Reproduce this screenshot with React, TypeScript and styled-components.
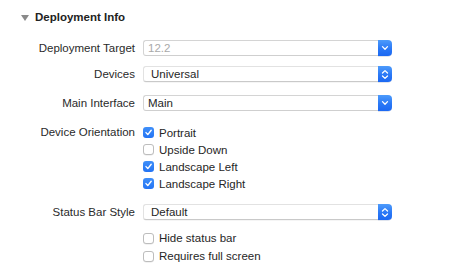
import React, {FC} from 'react'
import styled, {createGlobalStyle} from 'styled-components'

const GlobalStyle = createGlobalStyle`
  html, body {
    margin: 0;
    padding: 0;
    background: #fff;
  }
  body {
    font-family: "Liberation Sans", Arial, sans-serif;
    color: #262626;
    -webkit-font-smoothing: antialiased;
  }
`;

const Root = styled.div`
  width: 474px;
  height: 274px;
  overflow: hidden;
  box-sizing: border-box;
  padding: 9px 0 0 21px;
  display: flex;
  flex-direction: column;
`;

const Header = styled.div`
  display: flex;
  align-items: center;
  gap: 6px;
  height: 16px;
  font-size: 11.5px;
  font-weight: 700;
  color: #222;
`;

const Triangle = styled.span`
  width: 0;
  height: 0;
  border-left: 4px solid transparent;
  border-right: 4px solid transparent;
  border-top: 6px solid #8a8a8a;
  margin-top: 1px;
`;

type RowProps = {
    $top: number
}

const Row = styled.div<RowProps>`
  display: grid;
  grid-template-columns: 114px 249px;
  column-gap: 8px;
  align-items: start;
  margin-top: ${({$top}) => $top}px;
`;

const Label = styled.div`
  font-size: 11.5px;
  line-height: 16px;
  text-align: right;
  white-space: nowrap;
  color: #2a2a2a;
`;

const Field = styled.div`
  height: 16px;
  box-sizing: border-box;
  display: flex;
  align-items: stretch;
  font-size: 11.5px;
`;

type BoxProps = {
    $combo?: boolean
    $muted?: boolean
}

const FieldBox = styled.div<BoxProps>`
  flex: 1;
  display: flex;
  align-items: center;
  box-sizing: border-box;
  padding-left: ${({$combo}) => ($combo ? 4 : 7)}px;
  color: ${({$muted}) => ($muted ? '#a9a9a9' : '#262626')};
  background: #fff;
  border: 1px solid ${({$combo}) => ($combo ? '#d4d4d4' : '#e2e2e2')};
  border-bottom-color: ${({$combo}) => ($combo ? '#cfcfcf' : '#c9c9c9')};
  border-right: none;
  border-radius: 3px 0 0 3px;
  box-shadow: ${({$combo}) => ($combo ? 'none' : '0 0.5px 0.5px rgba(0,0,0,0.08)')};
`;

const ArrowButton = styled.div`
  width: 14px;
  display: flex;
  align-items: center;
  justify-content: center;
  border-radius: 0 4px 4px 0;
  background: linear-gradient(180deg, #4d9bfb 0%, #2a78f6 55%, #1b68f2 100%);
  box-shadow: 0 0.5px 0.5px rgba(0, 40, 120, 0.25);
`;

const Options = styled.div`
  display: flex;
  flex-direction: column;
`;

type CheckRowProps = {
    $height: number
}

const CheckRow = styled.label<CheckRowProps>`
  display: flex;
  align-items: center;
  gap: 5px;
  height: ${({$height}) => $height}px;
  font-size: 11.5px;
  color: #262626;
  white-space: nowrap;
`;

type BoxCheck = {
    $checked?: boolean
}

const CheckBox = styled.span<BoxCheck>`
  width: 11px;
  height: 11px;
  box-sizing: border-box;
  border-radius: 3px;
  display: flex;
  align-items: center;
  justify-content: center;
  background: ${({$checked}) => ($checked ? 'linear-gradient(180deg, #3f8ff9, #2474f4)' : '#fff')};
  border: ${({$checked}) => ($checked ? 'none' : '1px solid #bdbdbd')};
  box-shadow: ${({$checked}) => ($checked ? 'none' : '0 0.5px 0.5px rgba(0,0,0,0.1)')};
`;

const Chevron: FC<{double?: boolean}> = ({double}) => (
    double ? (
        <svg width="8" height="11" viewBox="0 0 8 11">
            <path d="M1.5 4 L4 1.6 L6.5 4" fill="none" stroke="#fff" strokeWidth="1.3" strokeLinecap="round" strokeLinejoin="round"/>
            <path d="M1.5 7 L4 9.4 L6.5 7" fill="none" stroke="#fff" strokeWidth="1.3" strokeLinecap="round" strokeLinejoin="round"/>
        </svg>
    ) : (
        <svg width="8" height="6" viewBox="0 0 8 6">
            <path d="M1.5 1.6 L4 4.2 L6.5 1.6" fill="none" stroke="#fff" strokeWidth="1.3" strokeLinecap="round" strokeLinejoin="round"/>
        </svg>
    )
)

const Check: FC = () => (
    <svg width="9" height="9" viewBox="0 0 9 9">
        <path d="M2 4.6 L3.8 6.6 L7.2 2.2" fill="none" stroke="#fff" strokeWidth="1.4" strokeLinecap="round" strokeLinejoin="round"/>
    </svg>
)

type Select = {
    label: string
    value: string
    top: number
    combo?: boolean
    muted?: boolean
}

const selects: Select[] = [
    {label: 'Deployment Target', value: '12.2', top: 15, combo: true, muted: true},
    {label: 'Devices', value: 'Universal', top: 10},
    {label: 'Main Interface', value: 'Main', top: 13, combo: true},
]

const orientations = [
    {name: 'Portrait', checked: true},
    {name: 'Upside Down', checked: false},
    {name: 'Landscape Left', checked: true},
    {name: 'Landscape Right', checked: true},
]

const statusOptions = ['Hide status bar', 'Requires full screen']

const SelectRow: FC<Select> = ({label, value, top, combo, muted}) => (
    <Row $top={top}>
        <Label>{label}</Label>
        <Field>
            <FieldBox $combo={combo} $muted={muted}>{value}</FieldBox>
            <ArrowButton><Chevron double={!combo}/></ArrowButton>
        </Field>
    </Row>
)

const App: FC = () => {
    return (
        <Root>
            <GlobalStyle/>
            <Header>
                <Triangle/>
                Deployment Info
            </Header>

            {selects.map((item, index) => (
                <SelectRow key={index} {...item}/>
            ))}

            <Row $top={13}>
                <Label>Device Orientation</Label>
                <Options>
                    {orientations.map((item, index) => (
                        <CheckRow key={index} $height={17}>
                            <CheckBox $checked={item.checked}>{item.checked && <Check/>}</CheckBox>
                            {item.name}
                        </CheckRow>
                    ))}
                </Options>
            </Row>

            <SelectRow label="Status Bar Style" value="Default" top={12}/>

            <Row $top={9}>
                <span/>
                <Options>
                    {statusOptions.map((item, index) => (
                        <CheckRow key={index} $height={18}>
                            <CheckBox/>
                            {item}
                        </CheckRow>
                    ))}
                </Options>
            </Row>
        </Root>
    )
}

export default App;
